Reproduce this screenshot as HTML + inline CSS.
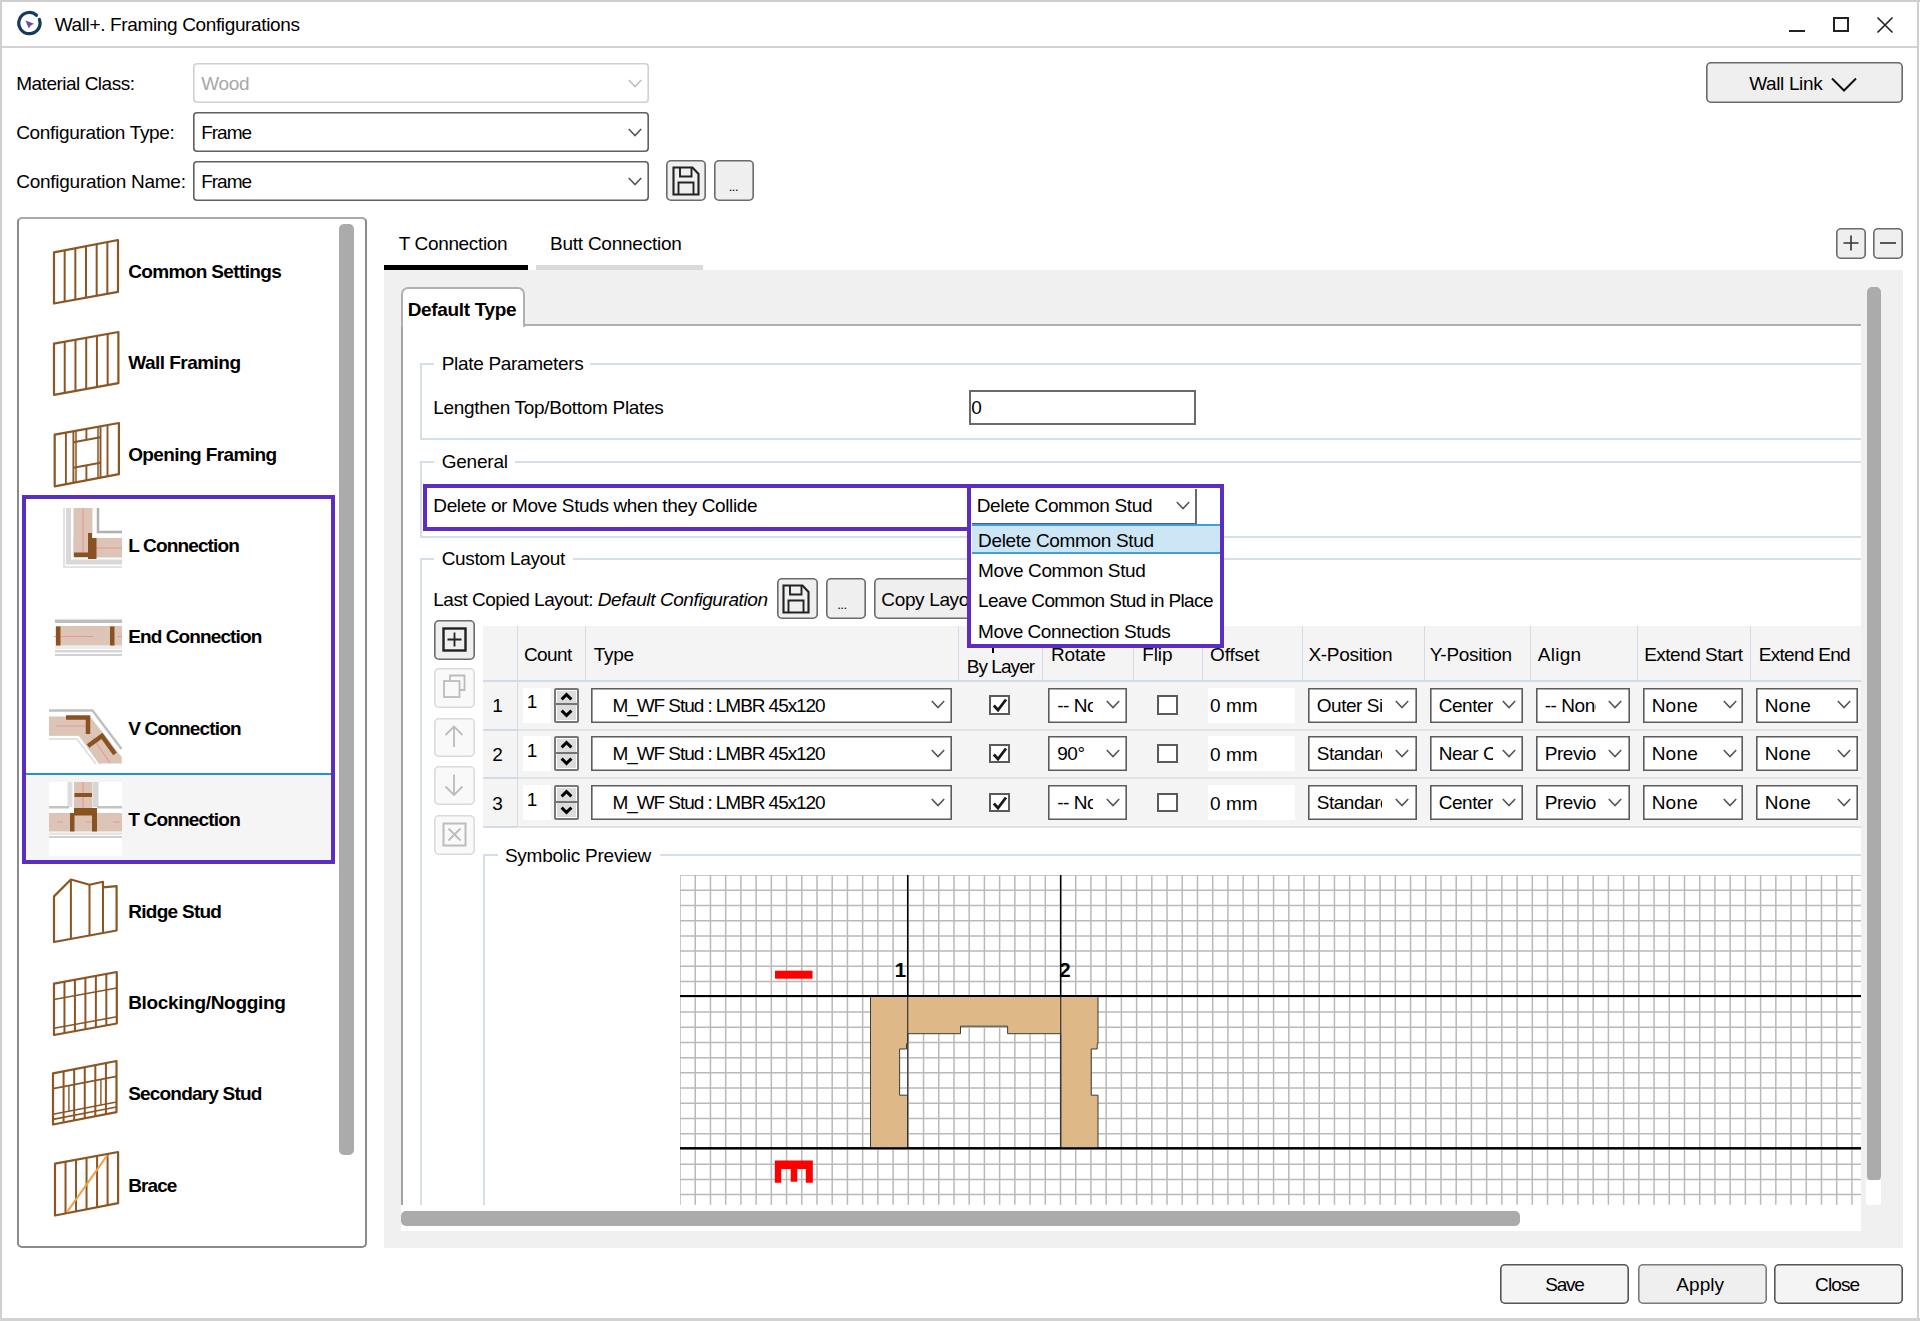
<!DOCTYPE html><html><head><meta charset="utf-8"><title>Wall+. Framing Configurations</title><style>
*{box-sizing:border-box;margin:0;padding:0}
html,body{width:1920px;height:1321px;overflow:hidden;background:#fff}
body{position:relative;font-family:"Liberation Sans",sans-serif;color:#000}
.a{position:absolute}
.t{position:absolute;font-family:"Liberation Sans",sans-serif;font-size:19px;line-height:19px;white-space:nowrap;color:#000;letter-spacing:-0.45px}
.b{font-weight:bold}
.i{font-style:italic}
.cmb{position:absolute;background:#fff;box-shadow:inset 0 0 0 1.6px #606060;border-radius:4px}
.btn{position:absolute;background:#efefef;box-shadow:inset 0 0 0 1.6px #6a6a6a;border-radius:5px}
.gb{position:absolute;border:2px solid #d6deea}
.sb{position:absolute;background:#ababab;border-radius:5px}
</style></head><body>
<div class="a" style="left:0px;top:0px;width:1920px;height:2px;background:#cfcfcf"></div>
<div class="a" style="left:0px;top:0px;width:2px;height:1321px;background:#cfcfcf"></div>
<div class="a" style="left:1917px;top:0px;width:2px;height:1321px;background:#cfcfcf"></div>
<div class="a" style="left:0px;top:1318px;width:1920px;height:3px;background:#d2d2d2"></div>
<div class="a" style="left:2px;top:46px;width:1915px;height:2px;background:#d3d3d3"></div>
<svg class="a" style="left:14px;top:9px" width="30" height="30" viewBox="0 0 30 30"><path d="M22.5 6.2 A10.6 10.6 0 1 0 25.4 10.5" fill="none" stroke="#17395a" stroke-width="3.2" stroke-linecap="round"/><path d="M11.5 11.4 L20 14.7 L16.7 16.6 L14.8 19.6 Z" fill="#6a4aa8"/></svg>
<div class="t " style="left:54.70px;top:14.5px;letter-spacing:-0.36px;">Wall+. Framing Configurations</div>
<div class="a" style="left:1789px;top:30px;width:16px;height:2px;background:#222"></div>
<div class="a" style="left:1833px;top:17px;width:16px;height:15px;border:2px solid #222"></div>
<svg class="a" style="left:1876px;top:16px" width="18" height="18" viewBox="0 0 18 18"><path d="M1.5 1.5 L16.5 16.5 M16.5 1.5 L1.5 16.5" stroke="#222" stroke-width="1.6"/></svg>
<div class="t " style="left:16.20px;top:74px;letter-spacing:-0.49px;">Material Class:</div>
<div class="t " style="left:16.20px;top:123px;letter-spacing:-0.32px;">Configuration Type:</div>
<div class="t " style="left:16.20px;top:172px;letter-spacing:-0.25px;">Configuration Name:</div>
<div class="cmb" style="left:193px;top:63px;width:456px;height:40px;box-shadow:inset 0 0 0 1.6px #d0d0d0"></div>
<div class="t " style="left:201.20px;top:74px;letter-spacing:-0.3px;color:#a8a8a8">Wood</div>
<svg class="a" style="left:628px;top:78.5px" width="14" height="9" viewBox="0 0 14 9"><path d="M0.8 1 L7.0 7.5 L13.2 1" fill="none" stroke="#bdbdbd" stroke-width="1.6"/></svg>
<div class="cmb" style="left:193px;top:112px;width:456px;height:40px"></div>
<div class="t " style="left:201.20px;top:123px;letter-spacing:-1.0px">Frame</div>
<svg class="a" style="left:628px;top:127.5px" width="14" height="9" viewBox="0 0 14 9"><path d="M0.8 1 L7.0 7.5 L13.2 1" fill="none" stroke="#555" stroke-width="1.6"/></svg>
<div class="cmb" style="left:193px;top:161px;width:456px;height:40px"></div>
<div class="t " style="left:201.20px;top:172px;letter-spacing:-1.0px">Frame</div>
<svg class="a" style="left:628px;top:176.5px" width="14" height="9" viewBox="0 0 14 9"><path d="M0.8 1 L7.0 7.5 L13.2 1" fill="none" stroke="#555" stroke-width="1.6"/></svg>
<div class="btn" style="left:666px;top:160px;width:40px;height:41px"></div>
<svg class="a" style="left:671.5px;top:165.5px" width="28.0" height="30.0" viewBox="0 0 28 30"><path d="M1.5 1.5 H20.5 L26.5 8 V28.5 H1.5 Z" fill="none" stroke="#222" stroke-width="2.1"/><path d="M8 1.5 V10.5 H19.5 V1.5" fill="none" stroke="#222" stroke-width="1.9"/><path d="M6.5 28.5 V16.5 H21.5 V28.5" fill="none" stroke="#222" stroke-width="1.9"/></svg>
<div class="btn" style="left:714px;top:160px;width:40px;height:41px"></div>
<div class="t " style="left:728.70px;top:177px;font-size:13px;letter-spacing:-0.5px">...</div>
<div class="btn" style="left:1706px;top:62px;width:197px;height:41px"></div>
<div class="t " style="left:1749.20px;top:74px;letter-spacing:-0.36px;">Wall Link</div>
<svg class="a" style="left:1831px;top:77px" width="26" height="15" viewBox="0 0 26 15"><path d="M1 1.5 L13 13.5 L25 1.5" fill="none" stroke="#111" stroke-width="2"/></svg>
<div class="a" style="left:17px;top:217px;width:350px;height:1031px;border:2px solid #8a8a8a;border-top-color:#a9a9a9;border-radius:5px;background:#fff"></div>
<div class="a" style="left:26px;top:774px;width:305px;height:86px;background:#f5f5f5"></div>
<div class="a" style="left:26px;top:772.5px;width:305px;height:2.0px;background:#1f93d6"></div>
<div class="sb" style="left:339px;top:224px;width:15px;height:931px"></div>
<div class="a" style="left:22px;top:495px;width:313px;height:369px;border:4.5px solid #5b2dc0"></div>
<div class="t b" style="left:128.20px;top:261.8px;letter-spacing:-0.64px;">Common Settings</div>
<div class="t b" style="left:128.20px;top:353.20000000000005px;letter-spacing:-0.52px;">Wall Framing</div>
<div class="t b" style="left:128.20px;top:444.6px;letter-spacing:-0.6px;">Opening Framing</div>
<div class="t b" style="left:128.20px;top:536.0px;letter-spacing:-0.85px;">L Connection</div>
<div class="t b" style="left:128.20px;top:627.4000000000001px;letter-spacing:-0.89px;">End Connection</div>
<div class="t b" style="left:128.20px;top:718.8px;letter-spacing:-0.81px;">V Connection</div>
<div class="t b" style="left:128.20px;top:810.2px;letter-spacing:-0.8px;">T Connection</div>
<div class="t b" style="left:128.20px;top:901.6000000000001px;letter-spacing:-0.72px;">Ridge Stud</div>
<div class="t b" style="left:128.20px;top:993.0px;letter-spacing:-0.33px;">Blocking/Nogging</div>
<div class="t b" style="left:128.20px;top:1084.4px;letter-spacing:-0.81px;">Secondary Stud</div>
<div class="t b" style="left:128.20px;top:1175.8px;letter-spacing:-0.9px;">Brace</div>
<svg class="a" style="left:52px;top:237.5px" width="68" height="67.5" viewBox="52 237.5 68 67.5"><path d="M54 251.8 L118 239.5 L118 291.3 L54 303 Z" fill="none" stroke="#8b5524" stroke-width="2.2" stroke-linejoin="round"/><path d="M64.67 249.75 L64.67 301.05" stroke="#8b5524" stroke-width="2"/><path d="M75.33 247.70 L75.33 299.10" stroke="#8b5524" stroke-width="2"/><path d="M86.00 245.65 L86.00 297.15" stroke="#8b5524" stroke-width="2"/><path d="M96.67 243.60 L96.67 295.20" stroke="#8b5524" stroke-width="2"/><path d="M107.33 241.55 L107.33 293.25" stroke="#8b5524" stroke-width="2"/></svg>
<svg class="a" style="left:52px;top:329.6px" width="68.4" height="66.79999999999995" viewBox="52 329.6 68.4 66.79999999999995"><path d="M54 343.2 L118.4 331.6 L118.4 382.8 L54 394.4 Z" fill="none" stroke="#8b5524" stroke-width="2.2" stroke-linejoin="round"/><path d="M64.73 341.27 L64.73 392.47" stroke="#8b5524" stroke-width="2"/><path d="M75.47 339.33 L75.47 390.53" stroke="#8b5524" stroke-width="2"/><path d="M86.20 337.40 L86.20 388.60" stroke="#8b5524" stroke-width="2"/><path d="M96.93 335.47 L96.93 386.67" stroke="#8b5524" stroke-width="2"/><path d="M107.67 333.53 L107.67 384.73" stroke="#8b5524" stroke-width="2"/></svg>
<svg class="a" style="left:52px;top:421px" width="70" height="68" viewBox="52 421 70 68"><path d="M54.7 434.6 L118.9 423 L118.9 474.2 L54.7 486.4 Z" fill="none" stroke="#8b5524" stroke-width="2.2" stroke-linejoin="round"/><path d="M65.9 432.58 L65.9 484.27" stroke="#8b5524" stroke-width="1.9"/><path d="M73.4 431.22 L73.4 482.85" stroke="#8b5524" stroke-width="1.9"/><path d="M76 430.75 L76 482.35" stroke="#8b5524" stroke-width="1.5"/><path d="M98 426.78 L98 478.17" stroke="#8b5524" stroke-width="1.5"/><path d="M100.5 426.32 L100.5 477.70" stroke="#8b5524" stroke-width="1.9"/><path d="M107.5 425.06 L107.5 476.37" stroke="#8b5524" stroke-width="1.9"/><path d="M73.4 442.22 L100.5 437.32 M73.4 467.85 L100.5 462.70" stroke="#8b5524" stroke-width="2"/><path d="M86.4 428.87 L86.4 439.87 M86.4 465.38 L86.4 480.38" stroke="#8b5524" stroke-width="1.9"/></svg>
<svg class="a" style="left:63px;top:507px" width="60" height="61" viewBox="63 507 60 61"><path d="M64 508 V567 H122" fill="none" stroke="#e2e2e2" stroke-width="2"/><path d="M68.5 508 V562 H122" fill="none" stroke="#d8d8d8" stroke-width="5"/><rect x="73.5" y="508" width="19" height="49.5" fill="#dcc4b6"/><rect x="73.5" y="538" width="48.5" height="19.5" fill="#dcc4b6"/><path d="M83 508 V557" stroke="#e89a9a" stroke-width="1.2"/><path d="M89 548 H122" stroke="#e89a9a" stroke-width="1.2"/><path d="M98 508 V532 H122" fill="none" stroke="#b0b0b0" stroke-width="2.5"/><rect x="88" y="533" width="4" height="26" fill="#8a5220"/><rect x="92" y="538" width="4.5" height="21" fill="#8a5220"/><rect x="74" y="552.5" width="18" height="4.5" fill="#8a5220"/></svg>
<svg class="a" style="left:54px;top:618px" width="69" height="39" viewBox="54 618 69 39"><rect x="55" y="619.5" width="67" height="3.5" fill="#bdbdbd"/><rect x="55.5" y="626" width="66.5" height="19.5" fill="#dcc4b6"/><path d="M53 636.5 H93 M118 636.5 H122" stroke="#e89a9a" stroke-width="1.2"/><rect x="56" y="626.5" width="4.5" height="19" fill="#8a5220"/><rect x="110" y="626.5" width="4.5" height="19" fill="#8a5220"/><rect x="55" y="646" width="67" height="3" fill="#ececec"/><rect x="55" y="650" width="67" height="2.5" fill="#d6d6d6"/><rect x="55" y="654" width="67" height="2" fill="#d0d0d0"/></svg>
<svg class="a" style="left:48px;top:708px" width="75" height="57" viewBox="48 708 75 57"><path d="M49 710.5 H92.5 L121.5 749" fill="none" stroke="#c0c0c0" stroke-width="2.5"/><path d="M49 735 H79 L100.5 764" fill="none" stroke="#d8d8d8" stroke-width="2"/><path d="M49 739 H77 L96 764" fill="none" stroke="#e2e2e2" stroke-width="2"/><path d="M49 716.5 H90 L121.8 757 V763.6 H98.7 L80 735.5 H49 Z" fill="#dcc4b6"/><path d="M56 726 H90 M93 738 L110 763" stroke="#e89a9a" stroke-width="1.2"/><path d="M66 717.5 H88 V734" fill="none" stroke="#8a5220" stroke-width="4.5"/><path d="M88 746 L102 736 L115 754" fill="none" stroke="#8a5220" stroke-width="4.5"/></svg>
<svg class="a" style="left:48px;top:781px" width="75" height="76" viewBox="48 781 75 76"><rect x="49" y="782" width="73" height="74" fill="#fff"/><rect x="67.5" y="782" width="5" height="25" fill="#dedede"/><rect x="93" y="782" width="5.5" height="25" fill="#d6d6d6"/><rect x="49" y="806" width="20" height="2.5" fill="#c4c4c4"/><rect x="97" y="806" width="25" height="2.5" fill="#c4c4c4"/><rect x="74" y="782" width="18.5" height="32" fill="#dcc4b6"/><rect x="49" y="813" width="73" height="18.5" fill="#dcc4b6"/><path d="M83 782 V812 M57 822 H63 M86 822 H92 M113 822 H120" stroke="#e89a9a" stroke-width="1.2"/><rect x="74.5" y="793" width="17.5" height="4" fill="#8a5220"/><rect x="74" y="808" width="23" height="7.5" fill="#8a5220"/><rect x="70" y="813" width="4.5" height="18.5" fill="#8a5220"/><rect x="92" y="813" width="5" height="18.5" fill="#8a5220"/><rect x="49" y="832.5" width="73" height="2.5" fill="#e4e4e4"/><rect x="49" y="836" width="73" height="2" fill="#d0d0d0"/></svg>
<svg class="a" style="left:51px;top:877px" width="68" height="68" viewBox="51 877 68 68"><path d="M54 942 V896.4 L70.9 879.5 L89.5 884.8 L103 881.8 V887.4 L116.6 886.1 V930.5 Z" fill="none" stroke="#8b5524" stroke-width="2.2" stroke-linejoin="round"/><path d="M70.9 879.5 V939 M89.5 884.8 V935.5 M103 881.8 V932.8" stroke="#8b5524" stroke-width="2"/></svg>
<svg class="a" style="left:52.4px;top:969.7px" width="66.80000000000001" height="67.0" viewBox="52.4 969.7 66.80000000000001 67.0"><path d="M54.4 983.3 L117.2 971.7 L117.2 1023.2 L54.4 1034.7 Z" fill="none" stroke="#8b5524" stroke-width="2.2" stroke-linejoin="round"/><path d="M64.87 981.37 L64.87 1032.78" stroke="#8b5524" stroke-width="2"/><path d="M75.33 979.43 L75.33 1030.87" stroke="#8b5524" stroke-width="2"/><path d="M85.80 977.50 L85.80 1028.95" stroke="#8b5524" stroke-width="2"/><path d="M96.27 975.57 L96.27 1027.03" stroke="#8b5524" stroke-width="2"/><path d="M106.73 973.63 L106.73 1025.12" stroke="#8b5524" stroke-width="2"/><path d="M54.4 999.23 L117.2 987.67" stroke="#8b5524" stroke-width="1.6"/><path d="M54.4 1028.02 L117.2 1016.50" stroke="#8b5524" stroke-width="1.6"/></svg>
<svg class="a" style="left:50.6px;top:1058.9px" width="67.5" height="67.5" viewBox="50.6 1058.9 67.5 67.5"><path d="M52.6 1073.2 L116.1 1060.9 L116.1 1112.1 L52.6 1124.4 Z" fill="none" stroke="#8b5524" stroke-width="2.2" stroke-linejoin="round"/><path d="M63.18 1071.15 L63.18 1122.35" stroke="#8b5524" stroke-width="2"/><path d="M73.77 1069.10 L73.77 1120.30" stroke="#8b5524" stroke-width="2"/><path d="M84.35 1067.05 L84.35 1118.25" stroke="#8b5524" stroke-width="2"/><path d="M94.93 1065.00 L94.93 1116.20" stroke="#8b5524" stroke-width="2"/><path d="M105.52 1062.95 L105.52 1114.15" stroke="#8b5524" stroke-width="2"/><path d="M52.6 1088.56 L116.1 1076.26" stroke="#8b5524" stroke-width="1.6"/><path d="M52.6 1114.16 L116.1 1101.86" stroke="#8b5524" stroke-width="1.6"/><path d="M52.6 1119.28 L116.1 1106.98" stroke="#8b5524" stroke-width="1.6"/><path d="M68.5 1085.48 V1111.08" stroke="#8b5524" stroke-width="1.4"/><path d="M100.5 1079.28 V1104.88" stroke="#8b5524" stroke-width="1.4"/></svg>
<svg class="a" style="left:53.3px;top:1149.6px" width="67.10000000000001" height="67.5" viewBox="53.3 1149.6 67.10000000000001 67.5"><path d="M55.3 1163.2 L118.4 1151.6 L118.4 1202.8 L55.3 1215.1 Z" fill="none" stroke="#8b5524" stroke-width="2.2" stroke-linejoin="round"/><path d="M65.82 1161.27 L65.82 1213.05" stroke="#8b5524" stroke-width="2"/><path d="M76.33 1159.33 L76.33 1211.00" stroke="#8b5524" stroke-width="2"/><path d="M86.85 1157.40 L86.85 1208.95" stroke="#8b5524" stroke-width="2"/><path d="M97.37 1155.47 L97.37 1206.90" stroke="#8b5524" stroke-width="2"/><path d="M107.88 1153.53 L107.88 1204.85" stroke="#8b5524" stroke-width="2"/><path d="M67.3 1211.7 L107.5 1155" stroke="#f0a048" stroke-width="2"/></svg>
<div class="t " style="left:398.70px;top:233.8px;letter-spacing:-0.34px;">T Connection</div>
<div class="t " style="left:550.00px;top:233.8px;letter-spacing:-0.24px;">Butt Connection</div>
<div class="a" style="left:384px;top:265px;width:144px;height:5px;background:#000"></div>
<div class="a" style="left:536px;top:265px;width:167px;height:4.5px;background:#dadada"></div>
<div class="btn" style="left:1836px;top:228px;width:30px;height:31px"></div>
<svg class="a" style="left:1842px;top:234px" width="18" height="18" viewBox="0 0 18 18"><path d="M1.5 9 H16.5 M9 1.5 V16.5" stroke="#333" stroke-width="1.6"/></svg>
<div class="btn" style="left:1873px;top:228px;width:30px;height:31px"></div>
<svg class="a" style="left:1879px;top:234px" width="18" height="18" viewBox="0 0 18 18"><path d="M1 9 H17" stroke="#333" stroke-width="1.6"/></svg>
<div class="a" style="left:384px;top:270px;width:1519px;height:978px;background:#f0f0f0"></div>
<div class="a" style="left:401px;top:324px;width:1460px;height:907px;background:#fff"></div>
<div class="a" style="left:401px;top:324px;width:2px;height:881px;background:#a3a3a3"></div>
<div class="a" style="left:401px;top:323.5px;width:1460px;height:2.0px;background:#b0b0b0"></div>
<div class="a" style="left:401px;top:286.5px;width:123.5px;height:40px;background:#fff;border:2px solid #b0b0b0;border-bottom:none;border-radius:7px 7px 0 0"></div>
<div class="t b" style="left:407.70px;top:299.5px;letter-spacing:-0.34px;">Default Type</div>
<div class="sb" style="left:1866.5px;top:286.5px;width:14.5px;height:894px"></div>
<div class="a" style="left:1866px;top:1180px;width:15px;height:25px;background:#fff"></div>
<div class="sb" style="left:401px;top:1211px;width:1119px;height:14.5px"></div>
<div class="a" style="left:403px;top:325.5px;width:1458px;height:879.5px;overflow:hidden"><div class="a" style="left:-403px;top:-325.5px;width:1920px;height:1321px">
<div class="gb" style="left:419.5px;top:363px;width:1442.5px;height:77px;border-right:none"></div>
<div class="a" style="left:434px;top:360px;width:156px;height:8px;background:#fff"></div>
<div class="t " style="left:441.70px;top:354.3px;letter-spacing:-0.31px;">Plate Parameters</div>
<div class="gb" style="left:419.5px;top:460.5px;width:1442.5px;height:77.0px;border-right:none"></div>
<div class="a" style="left:434px;top:457.5px;width:80.5px;height:8.0px;background:#fff"></div>
<div class="t " style="left:441.70px;top:451.8px;letter-spacing:-0.22px;">General</div>
<div class="gb" style="left:419.5px;top:557.7px;width:1442.5px;height:703.3px;border-right:none"></div>
<div class="a" style="left:434px;top:554.7px;width:138.5px;height:8.0px;background:#fff"></div>
<div class="t " style="left:441.70px;top:549.0px;letter-spacing:-0.35px;">Custom Layout</div>
<div class="t " style="left:433.20px;top:398px;letter-spacing:-0.31px;">Lengthen Top/Bottom Plates</div>
<div class="a" style="left:969px;top:390px;width:227px;height:35px;border:2px solid #6a6a6a;background:#fff"></div>
<div class="t " style="left:971.20px;top:398px;">0</div>
<div class="t " style="left:433.30px;top:495.6px;letter-spacing:-0.37px;">Delete or Move Studs when they Collide</div>
<div class="t " style="left:433.30px;top:590px;letter-spacing:-0.49px;">Last Copied Layout:</div>
<div class="t i" style="left:597.70px;top:590px;letter-spacing:-0.41px;">Default Configuration</div>
<div class="btn" style="left:776.5px;top:578px;width:41px;height:41px"></div>
<svg class="a" style="left:782px;top:583.5px" width="28.0" height="30.0" viewBox="0 0 28 30"><path d="M1.5 1.5 H20.5 L26.5 8 V28.5 H1.5 Z" fill="none" stroke="#222" stroke-width="2.1"/><path d="M8 1.5 V10.5 H19.5 V1.5" fill="none" stroke="#222" stroke-width="1.9"/><path d="M6.5 28.5 V16.5 H21.5 V28.5" fill="none" stroke="#222" stroke-width="1.9"/></svg>
<div class="btn" style="left:825.5px;top:578px;width:40.5px;height:41px"></div>
<div class="t " style="left:837.20px;top:595px;font-size:13px;letter-spacing:-0.5px">...</div>
<div class="btn" style="left:874px;top:578px;width:140px;height:41px"></div>
<div class="t " style="left:881.30px;top:590px;letter-spacing:-0.35px;">Copy Layout</div>
<div class="btn" style="left:434px;top:619.5px;width:41px;height:40px"></div>
<svg class="a" style="left:442px;top:626.5px" width="25" height="25" viewBox="0 0 25 25"><rect x="1.5" y="1.5" width="22" height="22" fill="none" stroke="#222" stroke-width="2.4"/><path d="M5.5 12.5 H19.5 M12.5 5.5 V19.5" stroke="#222" stroke-width="1.8"/></svg>
<div class="btn" style="left:434px;top:668.3px;width:41px;height:39.5px;background:#f9f9f9;box-shadow:inset 0 0 0 1.6px #dadada"></div>
<svg class="a" style="left:442px;top:674.3px" width="25" height="26" viewBox="0 0 25 26"><path d="M8 6 V1.5 H22.5 V16 H18" fill="none" stroke="#bcbcbc" stroke-width="1.8"/><rect x="2" y="7" width="15.5" height="16" fill="none" stroke="#bcbcbc" stroke-width="1.8"/></svg>
<div class="btn" style="left:434px;top:717.5px;width:41px;height:39.5px;background:#f9f9f9;box-shadow:inset 0 0 0 1.6px #dadada"></div>
<svg class="a" style="left:443px;top:724.5px" width="22" height="24" viewBox="0 0 22 24"><path d="M11 2 V22 M2.5 10 L11 1.5 L19.5 10" fill="none" stroke="#bcbcbc" stroke-width="1.8"/></svg>
<div class="btn" style="left:434px;top:765.8px;width:41px;height:39.5px;background:#f9f9f9;box-shadow:inset 0 0 0 1.6px #dadada"></div>
<svg class="a" style="left:443px;top:772.8px" width="22" height="24" viewBox="0 0 22 24"><path d="M11 1.5 V21.5 M2.5 13.5 L11 22 L19.5 13.5" fill="none" stroke="#bcbcbc" stroke-width="1.8"/></svg>
<div class="btn" style="left:434px;top:815px;width:41px;height:39.5px;background:#f9f9f9;box-shadow:inset 0 0 0 1.6px #dadada"></div>
<svg class="a" style="left:442px;top:822px" width="25" height="25" viewBox="0 0 25 25"><rect x="1.5" y="1.5" width="22" height="22" fill="none" stroke="#bcbcbc" stroke-width="2"/><path d="M6.5 6.5 L18.5 18.5 M18.5 6.5 L6.5 18.5" stroke="#bcbcbc" stroke-width="1.8"/></svg>
<div class="a" style="left:482.5px;top:626px;width:1378.5px;height:54px;background:#f4f4f4"></div>
<div class="a" style="left:482.5px;top:680px;width:1378.5px;height:147px;background:#f4f4f4"></div>
<div class="a" style="left:482.5px;top:679.5px;width:1378.5px;height:2.0px;background:#d3dce6"></div>
<div class="a" style="left:516.5px;top:626px;width:1.5px;height:54px;background:#d3dce6"></div>
<div class="a" style="left:584.5px;top:626px;width:1.5px;height:54px;background:#d3dce6"></div>
<div class="a" style="left:957.5px;top:626px;width:1.5px;height:54px;background:#d3dce6"></div>
<div class="a" style="left:1041.5px;top:626px;width:1.5px;height:54px;background:#d3dce6"></div>
<div class="a" style="left:1132.5px;top:626px;width:1.5px;height:54px;background:#d3dce6"></div>
<div class="a" style="left:1201.5px;top:626px;width:1.5px;height:54px;background:#d3dce6"></div>
<div class="a" style="left:1301.5px;top:626px;width:1.5px;height:54px;background:#d3dce6"></div>
<div class="a" style="left:1423.5px;top:626px;width:1.5px;height:54px;background:#d3dce6"></div>
<div class="a" style="left:1529.5px;top:626px;width:1.5px;height:54px;background:#d3dce6"></div>
<div class="a" style="left:1636.5px;top:626px;width:1.5px;height:54px;background:#d3dce6"></div>
<div class="a" style="left:1749.5px;top:626px;width:1.5px;height:54px;background:#d3dce6"></div>
<div class="a" style="left:516.5px;top:680px;width:1.5px;height:147px;background:#d3dce6"></div>
<div class="a" style="left:482.5px;top:728.5px;width:34.5px;height:2.0px;background:#d3dce6"></div>
<div class="a" style="left:518px;top:728.5px;width:1343px;height:2.0px;background:#e2e2e2"></div>
<div class="a" style="left:482.5px;top:777px;width:34.5px;height:2px;background:#d3dce6"></div>
<div class="a" style="left:518px;top:777px;width:1343px;height:2px;background:#e2e2e2"></div>
<div class="a" style="left:482.5px;top:826px;width:34.5px;height:2px;background:#d3dce6"></div>
<div class="a" style="left:518px;top:826px;width:1343px;height:2px;background:#e2e2e2"></div>
<div class="t " style="left:523.90px;top:644.5px;letter-spacing:-0.6px;">Count</div>
<div class="t " style="left:593.70px;top:644.5px;letter-spacing:-0.3px;">Type</div>
<div class="t " style="left:1051.10px;top:644.5px;letter-spacing:-0.24px;">Rotate</div>
<div class="t " style="left:1142.20px;top:644.5px;letter-spacing:-0.07px;">Flip</div>
<div class="t " style="left:1210.10px;top:644.5px;letter-spacing:-0.18px;">Offset</div>
<div class="t " style="left:1308.40px;top:644.5px;letter-spacing:-0.28px;">X-Position</div>
<div class="t " style="left:1429.70px;top:644.5px;letter-spacing:-0.27px;">Y-Position</div>
<div class="t " style="left:1537.70px;top:644.5px;letter-spacing:0.3px;">Align</div>
<div class="t " style="left:1644.20px;top:644.5px;letter-spacing:-0.52px;">Extend Start</div>
<div class="t " style="left:1758.70px;top:644.5px;letter-spacing:-0.7px;">Extend End</div>
<div class="t " style="left:966.70px;top:656.7px;letter-spacing:-0.94px;">By Layer</div>
<div class="a" style="left:991.5px;top:646px;width:2.0px;height:6.5px;background:#000"></div>
<div class="t " style="left:492.20px;top:695.8px;">1</div>
<div class="a" style="left:522.5px;top:687.5px;width:28.5px;height:35.0px;background:#fff"></div>
<div class="t " style="left:526.70px;top:692.0px;">1</div>
<div class="a" style="left:553.5px;top:687.5px;width:25px;height:35px;border:2px solid #777;border-radius:2px;background:#dcdcdc;box-shadow:inset 0 0 0 1px #fff"></div>
<div class="a" style="left:554.5px;top:703.3px;width:23.0px;height:2.2000000000000455px;background:#747474"></div>
<svg class="a" style="left:558.5px;top:691.5px" width="15" height="28" viewBox="0 0 15 28"><path d="M2.6 7.4 L7.5 2.6 L12.4 7.4 M2.6 18.6 L7.5 23.4 L12.4 18.6" fill="none" stroke="#000" stroke-width="2.9"/></svg>
<div class="a" style="left:591px;top:687.5px;width:360.5px;height:35px;box-shadow:inset 0 0 0 1.6px #5c5c5c;background:#fff"></div>
<div class="t" style="left:612.45px;top:695.5px;width:311.25px;height:26px;overflow:hidden;letter-spacing:-1.06px">M_WF Stud : LMBR 45x120</div>
<svg class="a" style="left:930.5px;top:700.0px" width="14" height="9" viewBox="0 0 14 9"><path d="M0.8 1 L7.0 7.5 L13.2 1" fill="none" stroke="#555" stroke-width="1.6"/></svg>
<div class="a" style="left:989px;top:695.0px;width:21px;height:19.5px;border:2px solid #5a5a5a;background:#fff"></div>
<svg class="a" style="left:992px;top:697.0px" width="16" height="16" viewBox="0 0 16 16"><path d="M1.8 8.5 L6 13 L14 2.5" fill="none" stroke="#1a1a1a" stroke-width="2.8"/></svg>
<div class="a" style="left:1048px;top:687.5px;width:79px;height:35px;box-shadow:inset 0 0 0 1.6px #5c5c5c;background:#fff"></div>
<div class="t" style="left:1057.20px;top:695.5px;width:35.5px;height:26px;overflow:hidden;">-- None</div>
<svg class="a" style="left:1105.6px;top:700.0px" width="14" height="9" viewBox="0 0 14 9"><path d="M0.8 1 L7.0 7.5 L13.2 1" fill="none" stroke="#555" stroke-width="1.6"/></svg>
<div class="a" style="left:1156.5px;top:695.0px;width:21px;height:19.5px;border:2px solid #5a5a5a;background:#fff"></div>
<div class="a" style="left:1207.5px;top:687.5px;width:87.5px;height:35.0px;background:#fff"></div>
<div class="t " style="left:1210.10px;top:695.8px;letter-spacing:0.0px;">0 mm</div>
<div class="a" style="left:1307.5px;top:687.5px;width:109.5px;height:35px;box-shadow:inset 0 0 0 1.6px #5c5c5c;background:#fff"></div>
<div class="t" style="left:1316.70px;top:695.5px;width:65.5px;height:26px;overflow:hidden;">Outer Side</div>
<svg class="a" style="left:1394.7px;top:700.0px" width="14" height="9" viewBox="0 0 14 9"><path d="M0.8 1 L7.0 7.5 L13.2 1" fill="none" stroke="#555" stroke-width="1.6"/></svg>
<div class="a" style="left:1429.5px;top:687.5px;width:93.5px;height:35px;box-shadow:inset 0 0 0 1.6px #5c5c5c;background:#fff"></div>
<div class="t" style="left:1438.70px;top:695.5px;width:54.0px;height:26px;overflow:hidden;">Center</div>
<svg class="a" style="left:1501.9px;top:700.0px" width="14" height="9" viewBox="0 0 14 9"><path d="M0.8 1 L7.0 7.5 L13.2 1" fill="none" stroke="#555" stroke-width="1.6"/></svg>
<div class="a" style="left:1535.5px;top:687.5px;width:94.5px;height:35px;box-shadow:inset 0 0 0 1.6px #5c5c5c;background:#fff"></div>
<div class="t" style="left:1544.70px;top:695.5px;width:51.5px;height:26px;overflow:hidden;">-- None</div>
<svg class="a" style="left:1608px;top:700.0px" width="14" height="9" viewBox="0 0 14 9"><path d="M0.8 1 L7.0 7.5 L13.2 1" fill="none" stroke="#555" stroke-width="1.6"/></svg>
<div class="a" style="left:1642.5px;top:687.5px;width:100.5px;height:35px;box-shadow:inset 0 0 0 1.6px #5c5c5c;background:#fff"></div>
<div class="t" style="left:1651.70px;top:695.5px;width:62.0px;height:26px;overflow:hidden;letter-spacing:0.2px">None</div>
<svg class="a" style="left:1722.8px;top:700.0px" width="14" height="9" viewBox="0 0 14 9"><path d="M0.8 1 L7.0 7.5 L13.2 1" fill="none" stroke="#555" stroke-width="1.6"/></svg>
<div class="a" style="left:1755.5px;top:687.5px;width:102.5px;height:35px;box-shadow:inset 0 0 0 1.6px #5c5c5c;background:#fff"></div>
<div class="t" style="left:1764.70px;top:695.5px;width:64.0px;height:26px;overflow:hidden;letter-spacing:0.2px">None</div>
<svg class="a" style="left:1837.3px;top:700.0px" width="14" height="9" viewBox="0 0 14 9"><path d="M0.8 1 L7.0 7.5 L13.2 1" fill="none" stroke="#555" stroke-width="1.6"/></svg>
<div class="t " style="left:492.20px;top:744.6999999999999px;">2</div>
<div class="a" style="left:522.5px;top:736.4px;width:28.5px;height:35.0px;background:#fff"></div>
<div class="t " style="left:526.70px;top:740.9px;">1</div>
<div class="a" style="left:553.5px;top:736.4px;width:25px;height:35px;border:2px solid #777;border-radius:2px;background:#dcdcdc;box-shadow:inset 0 0 0 1px #fff"></div>
<div class="a" style="left:554.5px;top:752.1999999999999px;width:23.0px;height:2.2000000000000455px;background:#747474"></div>
<svg class="a" style="left:558.5px;top:740.4px" width="15" height="28" viewBox="0 0 15 28"><path d="M2.6 7.4 L7.5 2.6 L12.4 7.4 M2.6 18.6 L7.5 23.4 L12.4 18.6" fill="none" stroke="#000" stroke-width="2.9"/></svg>
<div class="a" style="left:591px;top:736.4px;width:360.5px;height:35px;box-shadow:inset 0 0 0 1.6px #5c5c5c;background:#fff"></div>
<div class="t" style="left:612.45px;top:744.4px;width:311.25px;height:26px;overflow:hidden;letter-spacing:-1.06px">M_WF Stud : LMBR 45x120</div>
<svg class="a" style="left:930.5px;top:748.9px" width="14" height="9" viewBox="0 0 14 9"><path d="M0.8 1 L7.0 7.5 L13.2 1" fill="none" stroke="#555" stroke-width="1.6"/></svg>
<div class="a" style="left:989px;top:743.9px;width:21px;height:19.5px;border:2px solid #5a5a5a;background:#fff"></div>
<svg class="a" style="left:992px;top:745.9px" width="16" height="16" viewBox="0 0 16 16"><path d="M1.8 8.5 L6 13 L14 2.5" fill="none" stroke="#1a1a1a" stroke-width="2.8"/></svg>
<div class="a" style="left:1048px;top:736.4px;width:79px;height:35px;box-shadow:inset 0 0 0 1.6px #5c5c5c;background:#fff"></div>
<div class="t" style="left:1057.20px;top:744.4px;width:35.5px;height:26px;overflow:hidden;">90°</div>
<svg class="a" style="left:1105.6px;top:748.9px" width="14" height="9" viewBox="0 0 14 9"><path d="M0.8 1 L7.0 7.5 L13.2 1" fill="none" stroke="#555" stroke-width="1.6"/></svg>
<div class="a" style="left:1156.5px;top:743.9px;width:21px;height:19.5px;border:2px solid #5a5a5a;background:#fff"></div>
<div class="a" style="left:1207.5px;top:736.4px;width:87.5px;height:35.0px;background:#fff"></div>
<div class="t " style="left:1210.10px;top:744.6999999999999px;letter-spacing:0.0px;">0 mm</div>
<div class="a" style="left:1307.5px;top:736.4px;width:109.5px;height:35px;box-shadow:inset 0 0 0 1.6px #5c5c5c;background:#fff"></div>
<div class="t" style="left:1316.70px;top:744.4px;width:65.5px;height:26px;overflow:hidden;">Standard</div>
<svg class="a" style="left:1394.7px;top:748.9px" width="14" height="9" viewBox="0 0 14 9"><path d="M0.8 1 L7.0 7.5 L13.2 1" fill="none" stroke="#555" stroke-width="1.6"/></svg>
<div class="a" style="left:1429.5px;top:736.4px;width:93.5px;height:35px;box-shadow:inset 0 0 0 1.6px #5c5c5c;background:#fff"></div>
<div class="t" style="left:1438.70px;top:744.4px;width:54.0px;height:26px;overflow:hidden;">Near Core</div>
<svg class="a" style="left:1501.9px;top:748.9px" width="14" height="9" viewBox="0 0 14 9"><path d="M0.8 1 L7.0 7.5 L13.2 1" fill="none" stroke="#555" stroke-width="1.6"/></svg>
<div class="a" style="left:1535.5px;top:736.4px;width:94.5px;height:35px;box-shadow:inset 0 0 0 1.6px #5c5c5c;background:#fff"></div>
<div class="t" style="left:1544.70px;top:744.4px;width:51.5px;height:26px;overflow:hidden;">Previous</div>
<svg class="a" style="left:1608px;top:748.9px" width="14" height="9" viewBox="0 0 14 9"><path d="M0.8 1 L7.0 7.5 L13.2 1" fill="none" stroke="#555" stroke-width="1.6"/></svg>
<div class="a" style="left:1642.5px;top:736.4px;width:100.5px;height:35px;box-shadow:inset 0 0 0 1.6px #5c5c5c;background:#fff"></div>
<div class="t" style="left:1651.70px;top:744.4px;width:62.0px;height:26px;overflow:hidden;letter-spacing:0.2px">None</div>
<svg class="a" style="left:1722.8px;top:748.9px" width="14" height="9" viewBox="0 0 14 9"><path d="M0.8 1 L7.0 7.5 L13.2 1" fill="none" stroke="#555" stroke-width="1.6"/></svg>
<div class="a" style="left:1755.5px;top:736.4px;width:102.5px;height:35px;box-shadow:inset 0 0 0 1.6px #5c5c5c;background:#fff"></div>
<div class="t" style="left:1764.70px;top:744.4px;width:64.0px;height:26px;overflow:hidden;letter-spacing:0.2px">None</div>
<svg class="a" style="left:1837.3px;top:748.9px" width="14" height="9" viewBox="0 0 14 9"><path d="M0.8 1 L7.0 7.5 L13.2 1" fill="none" stroke="#555" stroke-width="1.6"/></svg>
<div class="t " style="left:492.20px;top:793.5999999999999px;">3</div>
<div class="a" style="left:522.5px;top:785.3px;width:28.5px;height:35.0px;background:#fff"></div>
<div class="t " style="left:526.70px;top:789.8px;">1</div>
<div class="a" style="left:553.5px;top:785.3px;width:25px;height:35px;border:2px solid #777;border-radius:2px;background:#dcdcdc;box-shadow:inset 0 0 0 1px #fff"></div>
<div class="a" style="left:554.5px;top:801.0999999999999px;width:23.0px;height:2.2000000000000455px;background:#747474"></div>
<svg class="a" style="left:558.5px;top:789.3px" width="15" height="28" viewBox="0 0 15 28"><path d="M2.6 7.4 L7.5 2.6 L12.4 7.4 M2.6 18.6 L7.5 23.4 L12.4 18.6" fill="none" stroke="#000" stroke-width="2.9"/></svg>
<div class="a" style="left:591px;top:785.3px;width:360.5px;height:35px;box-shadow:inset 0 0 0 1.6px #5c5c5c;background:#fff"></div>
<div class="t" style="left:612.45px;top:793.3px;width:311.25px;height:26px;overflow:hidden;letter-spacing:-1.06px">M_WF Stud : LMBR 45x120</div>
<svg class="a" style="left:930.5px;top:797.8px" width="14" height="9" viewBox="0 0 14 9"><path d="M0.8 1 L7.0 7.5 L13.2 1" fill="none" stroke="#555" stroke-width="1.6"/></svg>
<div class="a" style="left:989px;top:792.8px;width:21px;height:19.5px;border:2px solid #5a5a5a;background:#fff"></div>
<svg class="a" style="left:992px;top:794.8px" width="16" height="16" viewBox="0 0 16 16"><path d="M1.8 8.5 L6 13 L14 2.5" fill="none" stroke="#1a1a1a" stroke-width="2.8"/></svg>
<div class="a" style="left:1048px;top:785.3px;width:79px;height:35px;box-shadow:inset 0 0 0 1.6px #5c5c5c;background:#fff"></div>
<div class="t" style="left:1057.20px;top:793.3px;width:35.5px;height:26px;overflow:hidden;">-- None</div>
<svg class="a" style="left:1105.6px;top:797.8px" width="14" height="9" viewBox="0 0 14 9"><path d="M0.8 1 L7.0 7.5 L13.2 1" fill="none" stroke="#555" stroke-width="1.6"/></svg>
<div class="a" style="left:1156.5px;top:792.8px;width:21px;height:19.5px;border:2px solid #5a5a5a;background:#fff"></div>
<div class="a" style="left:1207.5px;top:785.3px;width:87.5px;height:35.0px;background:#fff"></div>
<div class="t " style="left:1210.10px;top:793.5999999999999px;letter-spacing:0.0px;">0 mm</div>
<div class="a" style="left:1307.5px;top:785.3px;width:109.5px;height:35px;box-shadow:inset 0 0 0 1.6px #5c5c5c;background:#fff"></div>
<div class="t" style="left:1316.70px;top:793.3px;width:65.5px;height:26px;overflow:hidden;">Standard</div>
<svg class="a" style="left:1394.7px;top:797.8px" width="14" height="9" viewBox="0 0 14 9"><path d="M0.8 1 L7.0 7.5 L13.2 1" fill="none" stroke="#555" stroke-width="1.6"/></svg>
<div class="a" style="left:1429.5px;top:785.3px;width:93.5px;height:35px;box-shadow:inset 0 0 0 1.6px #5c5c5c;background:#fff"></div>
<div class="t" style="left:1438.70px;top:793.3px;width:54.0px;height:26px;overflow:hidden;">Center</div>
<svg class="a" style="left:1501.9px;top:797.8px" width="14" height="9" viewBox="0 0 14 9"><path d="M0.8 1 L7.0 7.5 L13.2 1" fill="none" stroke="#555" stroke-width="1.6"/></svg>
<div class="a" style="left:1535.5px;top:785.3px;width:94.5px;height:35px;box-shadow:inset 0 0 0 1.6px #5c5c5c;background:#fff"></div>
<div class="t" style="left:1544.70px;top:793.3px;width:51.5px;height:26px;overflow:hidden;">Previous</div>
<svg class="a" style="left:1608px;top:797.8px" width="14" height="9" viewBox="0 0 14 9"><path d="M0.8 1 L7.0 7.5 L13.2 1" fill="none" stroke="#555" stroke-width="1.6"/></svg>
<div class="a" style="left:1642.5px;top:785.3px;width:100.5px;height:35px;box-shadow:inset 0 0 0 1.6px #5c5c5c;background:#fff"></div>
<div class="t" style="left:1651.70px;top:793.3px;width:62.0px;height:26px;overflow:hidden;letter-spacing:0.2px">None</div>
<svg class="a" style="left:1722.8px;top:797.8px" width="14" height="9" viewBox="0 0 14 9"><path d="M0.8 1 L7.0 7.5 L13.2 1" fill="none" stroke="#555" stroke-width="1.6"/></svg>
<div class="a" style="left:1755.5px;top:785.3px;width:102.5px;height:35px;box-shadow:inset 0 0 0 1.6px #5c5c5c;background:#fff"></div>
<div class="t" style="left:1764.70px;top:793.3px;width:64.0px;height:26px;overflow:hidden;letter-spacing:0.2px">None</div>
<svg class="a" style="left:1837.3px;top:797.8px" width="14" height="9" viewBox="0 0 14 9"><path d="M0.8 1 L7.0 7.5 L13.2 1" fill="none" stroke="#555" stroke-width="1.6"/></svg>
<div class="gb" style="left:483px;top:854px;width:1400px;height:400px;border-right:none;border-bottom:none"></div>
<div class="a" style="left:498px;top:849px;width:161.5px;height:11px;background:#fff"></div>
<div class="t " style="left:504.90px;top:845.5px;letter-spacing:-0.24px;">Symbolic Preview</div>
<svg class="a" style="left:680px;top:875.3px" width="1181" height="329.70000000000005" viewBox="0 0 1181 329.70000000000005" shape-rendering="auto"><rect x="0" y="0" width="1181" height="329.70000000000005" fill="#fff"/><path d="M0.00 0V329.70000000000005M15.22 0V329.70000000000005M30.44 0V329.70000000000005M45.66 0V329.70000000000005M60.88 0V329.70000000000005M76.10 0V329.70000000000005M91.32 0V329.70000000000005M106.54 0V329.70000000000005M121.76 0V329.70000000000005M136.98 0V329.70000000000005M152.20 0V329.70000000000005M167.42 0V329.70000000000005M182.64 0V329.70000000000005M197.86 0V329.70000000000005M213.08 0V329.70000000000005M228.30 0V329.70000000000005M243.52 0V329.70000000000005M258.74 0V329.70000000000005M273.96 0V329.70000000000005M289.18 0V329.70000000000005M304.40 0V329.70000000000005M319.62 0V329.70000000000005M334.84 0V329.70000000000005M350.06 0V329.70000000000005M365.28 0V329.70000000000005M380.50 0V329.70000000000005M395.72 0V329.70000000000005M410.94 0V329.70000000000005M426.16 0V329.70000000000005M441.38 0V329.70000000000005M456.60 0V329.70000000000005M471.82 0V329.70000000000005M487.04 0V329.70000000000005M502.26 0V329.70000000000005M517.48 0V329.70000000000005M532.70 0V329.70000000000005M547.92 0V329.70000000000005M563.14 0V329.70000000000005M578.36 0V329.70000000000005M593.58 0V329.70000000000005M608.80 0V329.70000000000005M624.02 0V329.70000000000005M639.24 0V329.70000000000005M654.46 0V329.70000000000005M669.68 0V329.70000000000005M684.90 0V329.70000000000005M700.12 0V329.70000000000005M715.34 0V329.70000000000005M730.56 0V329.70000000000005M745.78 0V329.70000000000005M761.00 0V329.70000000000005M776.22 0V329.70000000000005M791.44 0V329.70000000000005M806.66 0V329.70000000000005M821.88 0V329.70000000000005M837.10 0V329.70000000000005M852.32 0V329.70000000000005M867.54 0V329.70000000000005M882.76 0V329.70000000000005M897.98 0V329.70000000000005M913.20 0V329.70000000000005M928.42 0V329.70000000000005M943.64 0V329.70000000000005M958.86 0V329.70000000000005M974.08 0V329.70000000000005M989.30 0V329.70000000000005M1004.52 0V329.70000000000005M1019.74 0V329.70000000000005M1034.96 0V329.70000000000005M1050.18 0V329.70000000000005M1065.40 0V329.70000000000005M1080.62 0V329.70000000000005M1095.84 0V329.70000000000005M1111.06 0V329.70000000000005M1126.28 0V329.70000000000005M1141.50 0V329.70000000000005M1156.72 0V329.70000000000005M1171.94 0V329.70000000000005M0 0.00H1181M0 15.22H1181M0 30.44H1181M0 45.66H1181M0 60.88H1181M0 76.10H1181M0 91.32H1181M0 106.54H1181M0 121.76H1181M0 136.98H1181M0 152.20H1181M0 167.42H1181M0 182.64H1181M0 197.86H1181M0 213.08H1181M0 228.30H1181M0 243.52H1181M0 258.74H1181M0 273.96H1181M0 289.18H1181M0 304.40H1181M0 319.62H1181" stroke="#b9b9b9" stroke-width="1.5" fill="none"/><path d="M0 121.00H1181 M0 273.30H1181" stroke="#000" stroke-width="2"/><path d="M227.70 0V120.70 M380.70 0V120.70" stroke="#000" stroke-width="1.5"/><path d="M190.50 121.00 L227.50 121.00 L380.70 121.00 L418.00 121.00 L418.00 168.70 L417.20 168.70 L417.20 174.00 L411.20 174.00 L411.20 220.20 L418.00 220.20 L418.00 273.30 L380.70 273.30 L380.70 158.70 L327.60 158.70 L327.60 151.20 L280.50 151.20 L280.50 158.70 L227.70 158.70 L227.70 168.70 L226.50 168.70 L226.50 174.00 L219.60 174.00 L219.60 220.20 L227.50 220.20 L227.50 273.30 L190.50 273.30 Z" fill="#deb887" stroke="#3a3a3a" stroke-width="1"/><path d="M227.70 120.70V273.30 M380.70 120.70V273.30" stroke="#333" stroke-width="1.2"/><path d="M0 121.00H1181 M0 273.30H1181" stroke="#000" stroke-width="2"/><rect x="95" y="95.70" width="37.5" height="8" fill="#ff0000"/><path d="M94.80 285.50 H132.79999999999995 V307.70 H125.79999999999995 V293.90 H117.29999999999995 V306.70 H110.70000000000005 V293.90 H101.20000000000005 V307.70 H94.79999999999995 Z" fill="#ff0000"/></svg>
<div class="t b" style="left:894.70px;top:960.3px;font-size:20.5px;letter-spacing:0">1</div>
<div class="t b" style="left:1059.20px;top:960.3px;font-size:20.5px;letter-spacing:0">2</div>
</div></div>
<div class="btn" style="left:1500px;top:1264px;width:129px;height:40px;background:#f4f4f4;box-shadow:inset 0 0 0 1.6px #555"></div>
<div class="t " style="left:1545.20px;top:1275px;letter-spacing:-1.2px;">Save</div>
<div class="btn" style="left:1637.5px;top:1264px;width:129px;height:40px;background:#efefef;box-shadow:inset 0 0 0 1.6px #7a7a7a"></div>
<div class="t " style="left:1676.20px;top:1275px;letter-spacing:0.1px;">Apply</div>
<div class="btn" style="left:1774px;top:1264px;width:128.5px;height:40px;background:#f4f4f4;box-shadow:inset 0 0 0 1.6px #555"></div>
<div class="t " style="left:1815.10px;top:1275px;letter-spacing:-0.9px;">Close</div>
<div class="a" style="left:423px;top:484px;width:549px;height:47px;border:4.5px solid #5b2dc0"></div>
<div class="a" style="left:967px;top:484px;width:257px;height:163.5px;border:4.5px solid #5b2dc0;background:#fff"></div>
<div class="a" style="left:971.5px;top:488.5px;width:225px;height:36px;border-right:2px solid #6a6a6a;border-bottom:2px solid #5a5a5a;background:#fff"></div>
<div class="t " style="left:976.70px;top:496px;letter-spacing:-0.34px;">Delete Common Stud</div>
<svg class="a" style="left:1175.5px;top:500.5px" width="14" height="9" viewBox="0 0 14 9"><path d="M0.8 1 L7.0 7.5 L13.2 1" fill="none" stroke="#555" stroke-width="1.6"/></svg>
<div class="a" style="left:971.5px;top:524px;width:248px;height:30px;background:#cce6f5;border-top:2px solid #3aa0de;border-bottom:2px solid #3aa0de"></div>
<div class="t " style="left:978.10px;top:530.8px;letter-spacing:-0.34px;">Delete Common Stud</div>
<div class="t " style="left:978.10px;top:561.2px;letter-spacing:-0.36px;">Move Common Stud</div>
<div class="t " style="left:978.10px;top:591.4px;letter-spacing:-0.64px;">Leave Common Stud in Place</div>
<div class="t " style="left:978.10px;top:622.2px;letter-spacing:-0.45px;">Move Connection Studs</div>
</body></html>
